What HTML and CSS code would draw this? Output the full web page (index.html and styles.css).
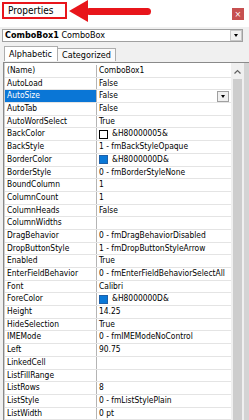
FILE: index.html
```html
<!DOCTYPE html>
<html lang="en">
<head>
    <meta charset="UTF-8">
    <title>Properties</title>
    <link rel="stylesheet" href="styles.css">
</head>
<body>
    <div class="window">
        <div class="titlebar">
            <div class="title-box">Properties</div>
            <svg class="arrow" width="84" height="24" viewBox="0 0 84 24">
                <polygon points="0,11 19,0 19,22" fill="#e8151b"/>
                <rect x="17" y="8" width="65" height="7" rx="3.5" fill="#e8151b"/>
            </svg>
            <div class="close">&#215;</div>
        </div>

        <div class="object-select">
            <span class="obj-name">ComboBox1</span>&nbsp;ComboBox
            <div class="drop-btn"><span class="tri"></span></div>
        </div>

        <div class="tabs">
            <div class="tab active">Alphabetic</div>
            <div class="tab">Categorized</div>
        </div>

        <div class="grid-frame">
            <div class="grid" id="grid"></div>
            <div class="scrollbar">
                <div class="scroll-up">
                    <svg width="7" height="5" viewBox="0 0 7 5"><polyline points="0.5,4.5 3.5,1.5 6.5,4.5" fill="none" stroke="#606060" stroke-width="1.2"/></svg>
                </div>
                <div class="thumb"></div>
            </div>
        </div>
    </div>

    <script>
        const props = [
            ["(Name)", "ComboBox1"],
            ["AutoLoad", "False"],
            ["AutoSize", "False", "selected"],
            ["AutoTab", "False"],
            ["AutoWordSelect", "True"],
            ["BackColor", "&H80000005&", "white"],
            ["BackStyle", "1 - fmBackStyleOpaque"],
            ["BorderColor", "&H8000000D&", "blue"],
            ["BorderStyle", "0 - fmBorderStyleNone"],
            ["BoundColumn", "1"],
            ["ColumnCount", "1"],
            ["ColumnHeads", "False"],
            ["ColumnWidths", ""],
            ["DragBehavior", "0 - fmDragBehaviorDisabled"],
            ["DropButtonStyle", "1 - fmDropButtonStyleArrow"],
            ["Enabled", "True"],
            ["EnterFieldBehavior", "0 - fmEnterFieldBehaviorSelectAll"],
            ["Font", "Calibri"],
            ["ForeColor", "&H8000000D&", "blue"],
            ["Height", "14.25"],
            ["HideSelection", "True"],
            ["IMEMode", "0 - fmIMEModeNoControl"],
            ["Left", "90.75"],
            ["LinkedCell", ""],
            ["ListFillRange", ""],
            ["ListRows", "8"],
            ["ListStyle", "0 - fmListStylePlain"],
            ["ListWidth", "0 pt"]
        ];

        const grid = document.getElementById("grid");
        for (const [name, value, kind] of props) {
            const row = document.createElement("div");
            row.className = "row";

            const n = document.createElement("div");
            n.className = "name" + (kind === "selected" ? " selected" : "");
            n.textContent = name;

            const v = document.createElement("div");
            v.className = "value";
            if (kind === "white" || kind === "blue") {
                const sw = document.createElement("span");
                sw.className = "swatch " + kind;
                v.appendChild(sw);
            }
            v.appendChild(document.createTextNode(value));
            if (kind === "selected") {
                const b = document.createElement("div");
                b.className = "cell-btn";
                b.innerHTML = '<span class="tri"></span>';
                v.appendChild(b);
            }

            row.appendChild(n);
            row.appendChild(v);
            grid.appendChild(row);
        }
    </script>
</body>
</html>
```

FILE: styles.css
```css
body {
    margin: 0;
    font-family: "DejaVu Sans Condensed", "DejaVu Sans", sans-serif;
    font-size: 8.4px;
    color: #000;
}

.window {
    width: 249px;
    height: 420px;
    overflow: hidden;
    background: #f0f0f0;
    display: flex;
    flex-direction: column;
}

.titlebar {
    height: 27px;
    background: #fff;
    display: flex;
    align-items: flex-start;
    flex-shrink: 0;
}

.title-box {
    margin: 2px 0 0 2px;
    width: 57px;
    height: 13px;
    border: 2px solid #e8151b;
    background: #fff;
    font-size: 10px;
    line-height: 13px;
    padding-left: 4px;
}

.arrow {
    margin-left: 2px;
    margin-top: 0;
}

.close {
    margin-left: auto;
    margin-right: 5px;
    margin-top: 8px;
    width: 12px;
    height: 12px;
    background: #c75050;
    color: #fff;
    font-size: 9px;
    line-height: 12px;
    text-align: center;
}

.object-select {
    margin: 2px 6px 0 2px;
    height: 11px;
    border: 1px solid #a0a0a0;
    background: #fff;
    font-size: 9px;
    line-height: 11px;
    padding-left: 2px;
    display: flex;
    align-items: center;
    flex-shrink: 0;
}

.obj-name {
    font-weight: bold;
}

.drop-btn {
    margin-left: auto;
    width: 10px;
    height: 9px;
    border: 1px solid #c8c8c8;
    background: #f0f0f0;
    display: flex;
    align-items: center;
    justify-content: center;
}

.tri {
    width: 0;
    height: 0;
    border-left: 2.5px solid transparent;
    border-right: 2.5px solid transparent;
    border-top: 3px solid #000;
}

.tabs {
    display: flex;
    align-items: flex-end;
    margin: 4px 0 0 4px;
    height: 15px;
    flex-shrink: 0;
}

.tab {
    height: 12px;
    line-height: 12px;
    padding: 0 4px;
    border: 1px solid #adadad;
    border-bottom: none;
    background: #fafafa;
    font-size: 9px;
}

.tab.active {
    height: 14px;
    line-height: 14px;
    background: #fff;
    padding: 0 5px 0 4px;
}

.tab + .tab {
    margin-left: -1px;
}

.grid-frame {
    margin: 1px 0 0 3px;
    flex: 1;
    display: flex;
    border-top: 1px solid #8a8a8a;
    border-left: 1px solid #8a8a8a;
    min-height: 0;
}

.grid {
    flex: 1;
    background: #fff;
    padding-top: 2px;
    border-left: 1px solid #d0d0d0;
}

.row {
    display: flex;
    height: 12.7px;
    line-height: 11.7px;
    border-bottom: 1px solid #e4e4e4;
    box-sizing: border-box;
}

.name {
    width: 89px;
    padding-left: 2px;
    border-right: 1px solid #b4b4b4;
    white-space: nowrap;
    overflow: hidden;
}

.name.selected {
    background: #0a76d6;
    color: #fff;
}

.value {
    flex: 1;
    padding-left: 2px;
    white-space: nowrap;
    overflow: hidden;
    display: flex;
    align-items: center;
}

.swatch {
    width: 9px;
    height: 9px;
    margin-right: 4px;
    box-sizing: border-box;
}

.swatch.white {
    border: 1px solid #000;
    background: #fff;
}

.swatch.blue {
    border: 1px solid #1d5fa8;
    background: #0a78d7;
}

.cell-btn {
    margin-left: auto;
    margin-right: 2px;
    width: 10px;
    height: 9px;
    border: 1px solid #a0a0a0;
    background: #f0f0f0;
    display: flex;
    align-items: center;
    justify-content: center;
}

.scrollbar {
    width: 13px;
    background: #f0f0f0;
    display: flex;
    flex-direction: column;
    border-right: 5px solid #d4d4d4;
}

.scroll-up {
    height: 16px;
    display: flex;
    align-items: center;
    justify-content: center;
}

.thumb {
    flex: 1;
    margin: 0 2px;
    background: #cdcdcd;
}
```
